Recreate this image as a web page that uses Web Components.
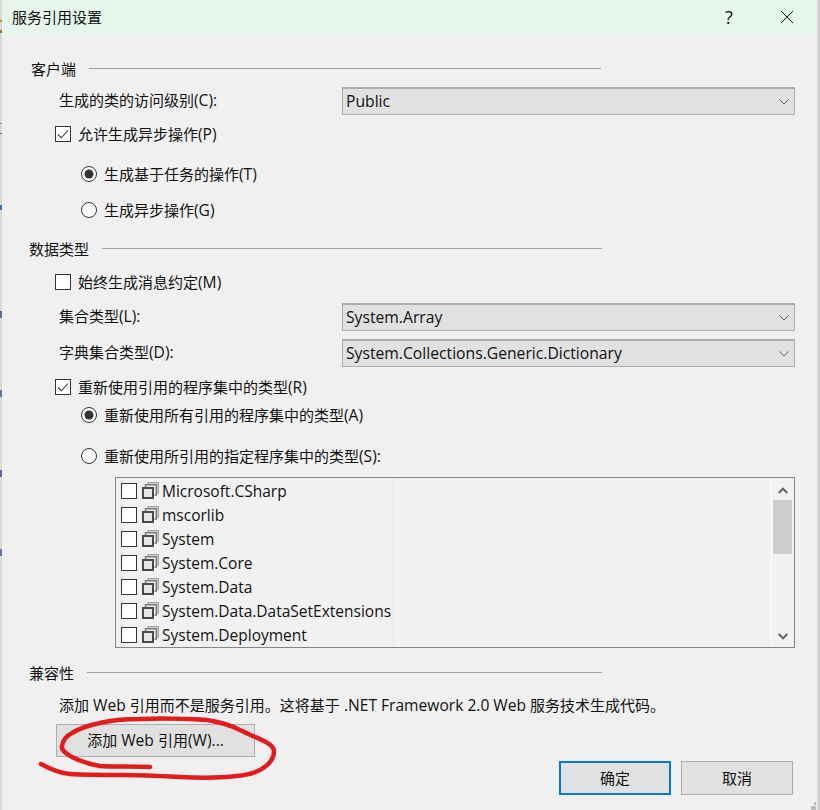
<!DOCTYPE html>
<html lang="zh">
<head>
<meta charset="utf-8">
<title>服务引用设置</title>
<style>
  html, body { margin: 0; padding: 0; background: #d6d9d6; }
  body { font: 15px "Open Sans", "Noto Sans CJK SC", sans-serif; color: #111; overflow: hidden; }
  .l { font-size: 15.6px; }
</style>
</head>
<body>
<svc-dialog>
  <svc-titlebar>服务引用设置</svc-titlebar>

  <svc-group-header style="margin-top:21px;--indent:29px;--line-left:87px;--line-right:216px">客户端</svc-group-header>
  <svc-field style="margin-top:6px" value="Public">生成的类的访问级别<span class="l">(C):</span></svc-field>
  <svc-check style="margin-top:7px" checked>允许生成异步操作<span class="l">(P)</span></svc-check>
  <svc-radio style="margin-top:16px" checked>生成基于任务的操作<span class="l">(T)</span></svc-radio>
  <svc-radio style="margin-top:12px">生成异步操作<span class="l">(G)</span></svc-radio>

  <svc-group-header style="margin-top:15px;--indent:27px;--line-left:100px;--line-right:215px">数据类型</svc-group-header>
  <svc-check style="margin-top:9px">始终生成消息约定<span class="l">(M)</span></svc-check>
  <svc-field style="margin-top:9px" value="System.Array">集合类型<span class="l">(L):</span></svc-field>
  <svc-field style="margin-top:8px" value="System.Collections.Generic.Dictionary">字典集合类型<span class="l">(D):</span></svc-field>
  <svc-check style="margin-top:8px" checked>重新使用引用的程序集中的类型<span class="l">(R)</span></svc-check>
  <svc-radio style="margin-top:4px" checked>重新使用所有引用的程序集中的类型<span class="l">(A)</span></svc-radio>
  <svc-radio style="margin-top:17px">重新使用所引用的指定程序集中的类型<span class="l">(S):</span></svc-radio>

  <svc-listbox style="margin-top:9px">
    <svc-assembly>Microsoft.CSharp</svc-assembly>
    <svc-assembly>mscorlib</svc-assembly>
    <svc-assembly>System</svc-assembly>
    <svc-assembly>System.Core</svc-assembly>
    <svc-assembly>System.Data</svc-assembly>
    <svc-assembly>System.Data.DataSetExtensions</svc-assembly>
    <svc-assembly>System.Deployment</svc-assembly>
  </svc-listbox>

  <svc-group-header style="margin-top:13px;--indent:27px;--line-left:85px;--line-right:215px">兼容性</svc-group-header>
  <svc-note style="margin-top:9px">添加<span class="l"> Web </span>引用而不是服务引用。这将基于<span class="l"> .NET Framework 2.0 Web </span>服务技术生成代码。</svc-note>
  <svc-actions style="margin-top:6px">
    <svc-button style="width:199px;height:33px">添加<span class="l"> Web </span>引用<span class="l">(W)...</span></svc-button>
  </svc-actions>
  <svc-footer style="margin-top:4px">
    <svc-button primary style="width:112px;height:34px">确定</svc-button>
    <svc-button style="width:112px;height:34px">取消</svc-button>
  </svc-footer>
  <svc-scribble></svc-scribble>
</svc-dialog>

<script>
function shadow(el, html) {
  el.attachShadow({ mode: 'open' }).innerHTML = html;
}

// bits of the window behind that show in the left strip: [top, height, colour]
const BEHIND = [[20, 2, '#c98a2a'], [30, 3, '#a8701c'], [123, 1, '#a08060'], [133, 1, '#8a6a50'],
  [205, 5, '#3c6ea8'], [311, 7, '#5a6aa0'], [390, 7, '#5a78a8'], [470, 7, '#5a6aa0'], [549, 7, '#5a78a8']];

class SvcDialog extends HTMLElement {
  connectedCallback() {
    const marks = BEHIND.map(([t, h, c]) => `<i style="top:${t}px;height:${h}px;background:${c}"></i>`).join('');
    shadow(this, `
      <style>
        :host { display: block; position: relative; height: 810px; width: 815px; margin-left: 2px; background: #f0f0f0; box-sizing: border-box; }
        .edge { position: absolute; left: 815px; top: 0; width: 3px; height: 810px; background: #d4d4d4; }
        .grip { position: absolute; right: 1px; bottom: 0; width: 5px; height: 8px; }
        .grip i { position: absolute; background: #bdbdbd; }
        .behind i { position: absolute; left: -2px; width: 2px; }
      </style>
      <slot></slot><div class="edge"></div>
      <div class="behind">${marks}</div>
      <div class="grip"><i style="left:3px;top:0;width:2px;height:3px"></i><i style="left:0;top:4px;width:3px;height:4px"></i><i style="left:3px;top:4px;width:2px;height:4px"></i></div>`);
  }
}

class SvcTitlebar extends HTMLElement {
  connectedCallback() {
    shadow(this, `
      <style>
        :host { display: flex; align-items: center; height: 36px; padding: 0 0 0 10px; box-sizing: border-box; background: #e6f6ec; color: #111; }
        .t { flex: 1; padding-bottom: 3px; }
        .help { width: 20px; text-align: center; margin-right: 41px; font-size: 18px; line-height: 20px; padding-bottom: 3px; }
        svg { display: block; margin-right: 23px; margin-bottom: 2px; }
      </style>
      <div class="t"><slot></slot></div>
      <div class="help">?</div>
      <svg width="14" height="14" viewBox="0 0 14 14"><path d="M1 1L13 13M13 1L1 13" stroke="#111" stroke-width="1" fill="none"/></svg>`);
  }
}

class SvcGroupHeader extends HTMLElement {
  connectedCallback() {
    shadow(this, `
      <style>
        :host { display: block; position: relative; height: 24px; line-height: 24px; padding-left: var(--indent); }
        .line { position: absolute; left: var(--line-left); right: var(--line-right); top: 11px; height: 1px; background: #a0a0a0; }
      </style>
      <slot></slot><div class="line"></div>`);
  }
}

class SvcField extends HTMLElement {
  connectedCallback() {
    shadow(this, `
      <style>
        :host { display: grid; grid-template-columns: 283px 453px; padding-left: 57px; height: 28px; align-items: center; }
        .lab { padding-bottom: 2px; }
        .sel { height: 28px; box-sizing: border-box; border: 1px solid #adadad; border-width: 2px 1px 1px 1px; background: #e1e1e1; display: flex; align-items: center; justify-content: space-between; padding: 0 5px 0 3px; }
        .sel span { font-size: 15.7px; padding-bottom: 2px; }
        svg { display: block; }
      </style>
      <div class="lab"><slot></slot></div>
      <div class="sel"><span>${this.getAttribute('value')}</span>
        <svg width="10" height="6" viewBox="0 0 10 6"><path d="M.5 .5L5 5L9.5 .5" stroke="#666" fill="none"/></svg>
      </div>`);
  }
}

class SvcCheck extends HTMLElement {
  connectedCallback() {
    const mark = this.hasAttribute('checked')
      ? '<path d="M3 8.5L6.3 11.8L13 4.5" stroke="#333" stroke-width="1.1" fill="none"/>' : '';
    shadow(this, `
      <style>
        :host { display: flex; align-items: center; gap: 7px; height: 24px; padding-left: 53px; }
        svg { display: block; flex: none; }
        div { padding-bottom: 1px; }
      </style>
      <svg width="16" height="16" viewBox="0 0 16 16"><rect x=".5" y=".5" width="15" height="15" fill="#fff" stroke="#333"/>${mark}</svg>
      <div><slot></slot></div>`);
  }
}

class SvcRadio extends HTMLElement {
  connectedCallback() {
    const dot = this.hasAttribute('checked') ? '<circle cx="8" cy="8" r="4.5" fill="#333"/>' : '';
    shadow(this, `
      <style>
        :host { display: flex; align-items: center; gap: 7px; height: 24px; padding-left: 79px; }
        svg { display: block; flex: none; }
        div { padding-bottom: 1px; }
      </style>
      <svg width="16" height="16" viewBox="0 0 16 16"><circle cx="8" cy="8" r="7.5" fill="#fff" stroke="#333"/>${dot}</svg>
      <div><slot></slot></div>`);
  }
}

class SvcListbox extends HTMLElement {
  connectedCallback() {
    shadow(this, `
      <style>
        :host { display: flex; width: 680px; height: 171px; margin-left: 113px; box-sizing: border-box; border: 1px solid #82878c; background: #f1f1f1; overflow: hidden; }
        .rows { width: 272px; height: 166px; margin-top: 1px; border-right: 1px solid #e3e5e8; padding-left: 5px; overflow: hidden; flex: none; }
        .blank { flex: 1; }
        .bar { width: 21px; flex: none; margin: 2px 1px 1px 0; border-left: 1px solid #fff; display: flex; flex-direction: column; align-items: center; }
        .btn { height: 20px; display: flex; align-items: center; justify-content: center; flex: none; }
        .thumb { width: 19px; height: 54px; background: #cdcdcd; flex: none; }
        .track { flex: 1; }
        svg { display: block; }
      </style>
      <div class="rows"><slot></slot></div>
      <div class="blank"></div>
      <div class="bar">
        <div class="btn"><svg width="10" height="7" viewBox="0 0 10 7"><path d="M.8 6L5 1.6L9.2 6" stroke="#606060" stroke-width="2" fill="none"/></svg></div>
        <div class="thumb"></div>
        <div class="track"></div>
        <div class="btn"><svg width="10" height="7" viewBox="0 0 10 7"><path d="M.8 1L5 5.4L9.2 1" stroke="#606060" stroke-width="2" fill="none"/></svg></div>
      </div>`);
  }
}

class SvcAssembly extends HTMLElement {
  connectedCallback() {
    shadow(this, `
      <style>
        :host { display: flex; align-items: center; height: 24px; white-space: nowrap; }
        svg { display: block; flex: none; }
        .box { margin-right: 5px; }
        .ic { margin-right: 3px; margin-bottom: 1px; }
        div { font-size: 15.5px; padding-bottom: 1px; }
      </style>
      <svg class="box" width="16" height="16" viewBox="0 0 16 16"><rect x=".5" y=".5" width="15" height="15" fill="#fff" stroke="#333"/></svg>
      <svg class="ic" width="17" height="17" viewBox="0 0 17 17">
        <path d="M6 3V.75H16.25V11H14" stroke="#a6a6a6" stroke-width="1.5" fill="none"/>
        <path d="M3.5 5V2.75H14.25V13H12.5" stroke="#7c7c7c" stroke-width="1.5" fill="none"/>
        <rect x="1" y="6" width="10" height="10" fill="#e6e6e6" stroke="#4a4a4a" stroke-width="2"/>
      </svg>
      <div><slot></slot></div>`);
  }
}

class SvcNote extends HTMLElement {
  connectedCallback() {
    shadow(this, `
      <style>:host { display: block; height: 24px; line-height: 23px; padding-left: 57px; white-space: nowrap; }</style>
      <slot></slot>`);
  }
}

class SvcActions extends HTMLElement {
  connectedCallback() {
    shadow(this, `<style>:host { display: flex; padding-left: 54px; }</style><slot></slot>`);
  }
}

class SvcFooter extends HTMLElement {
  connectedCallback() {
    shadow(this, `<style>:host { display: flex; justify-content: flex-end; gap: 10px; padding-right: 24px; }</style><slot></slot>`);
  }
}

class SvcButton extends HTMLElement {
  connectedCallback() {
    const border = this.hasAttribute('primary') ? '2px solid #0078d7' : '1px solid #adadad';
    shadow(this, `
      <style>
        :host { display: block; box-sizing: border-box; background: #e1e1e1; border: ${border}; flex: none; }
        div { height: 100%; display: flex; align-items: center; justify-content: center; white-space: pre; padding-bottom: 2px; box-sizing: border-box; }
      </style>
      <div><span><slot></slot></span></div>`);
  }
}

class SvcScribble extends HTMLElement {
  connectedCallback() {
    shadow(this, `
      <style>
        :host { display: block; position: absolute; left: -2px; top: 700px; width: 300px; height: 90px; pointer-events: none; }
        svg { display: block; }
      </style>
      <svg width="300" height="90" viewBox="0 700 300 90">
        <path d="M150 767C130 766 112 767 100 766C88 764 78 760 72 757C65 753 61 750 62 746C63 740 66 736 72 733C80 728 90 725 100 723C112 720 125 719 140 719C160 718 190 719 207 720C220 722 232 726 240 730C250 735 258 738 264 741C270 744 274 747 274 751C274 757 271 762 266 766C260 771 250 775 236 776C220 778 200 778 180 777C160 776 140 775 125 775C105 775 85 775 70 774C58 773 50 769 41 764" fill="none" stroke="#e21c1c" stroke-width="4.5" stroke-linecap="round" stroke-linejoin="round"/>
      </svg>`);
  }
}

customElements.define('svc-dialog', SvcDialog);
customElements.define('svc-titlebar', SvcTitlebar);
customElements.define('svc-group-header', SvcGroupHeader);
customElements.define('svc-field', SvcField);
customElements.define('svc-check', SvcCheck);
customElements.define('svc-radio', SvcRadio);
customElements.define('svc-listbox', SvcListbox);
customElements.define('svc-assembly', SvcAssembly);
customElements.define('svc-note', SvcNote);
customElements.define('svc-actions', SvcActions);
customElements.define('svc-footer', SvcFooter);
customElements.define('svc-button', SvcButton);
customElements.define('svc-scribble', SvcScribble);
</script>
</body>
</html>
